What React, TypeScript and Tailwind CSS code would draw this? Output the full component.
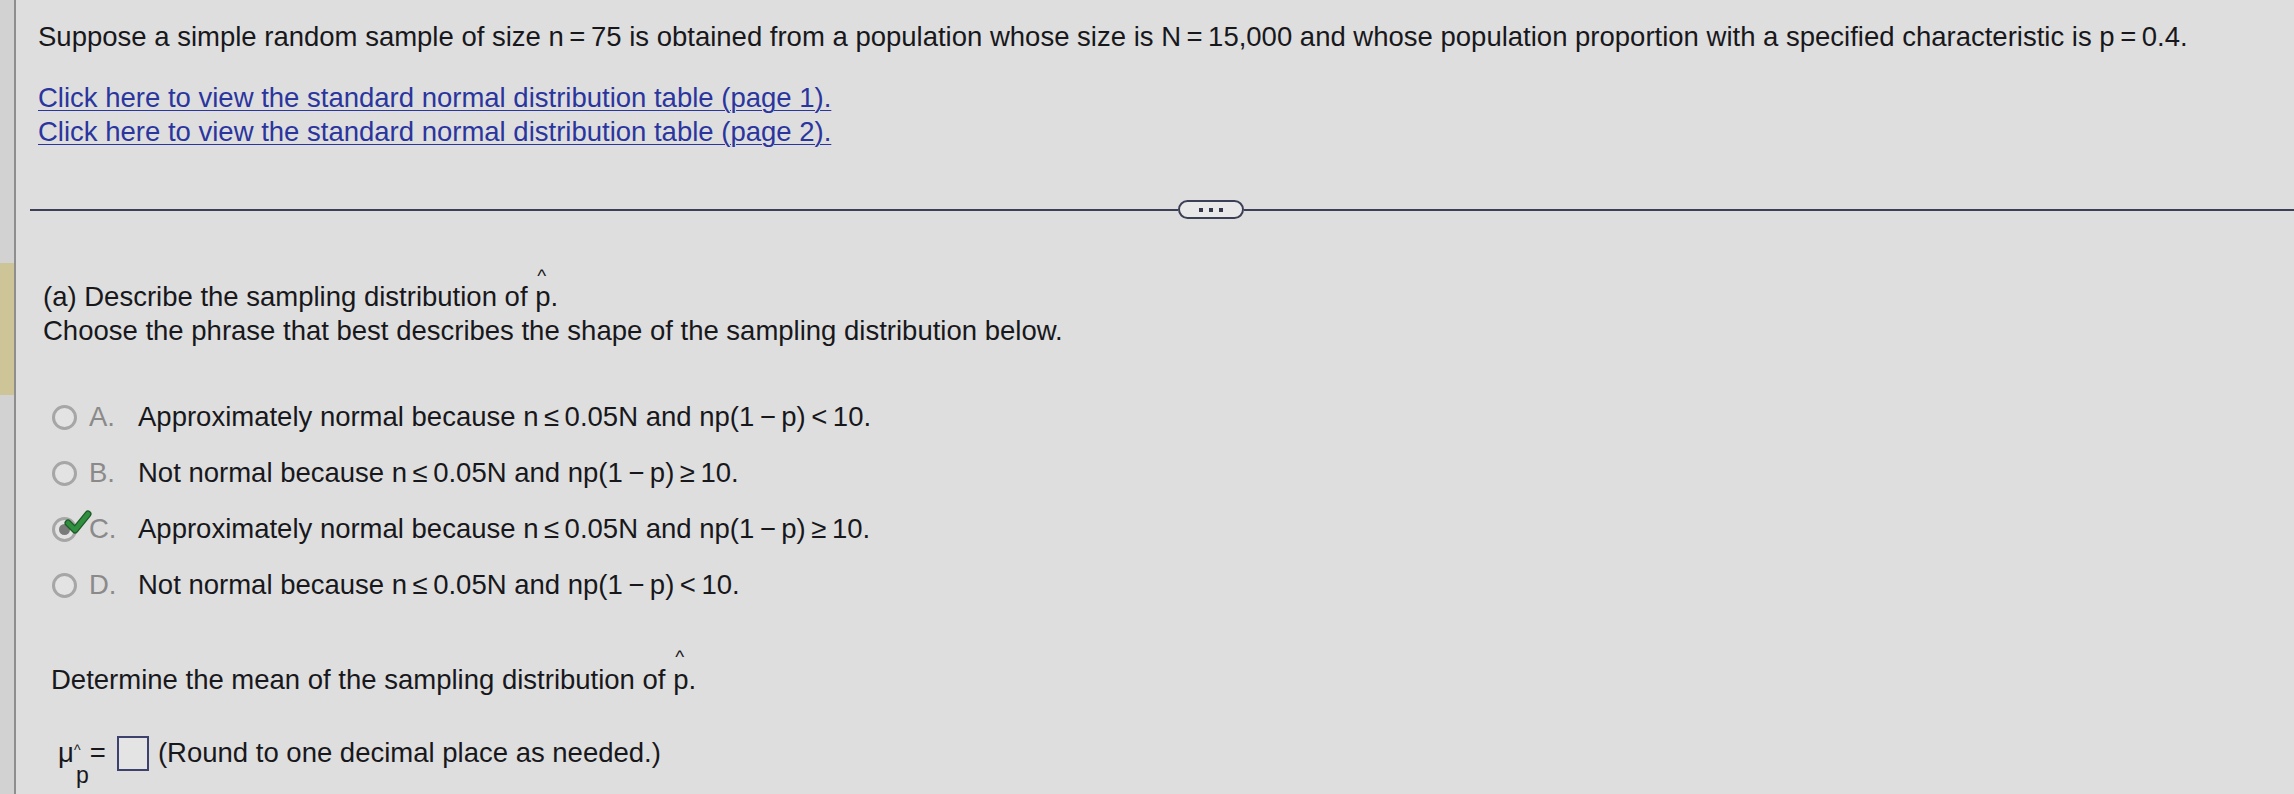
import React from "react";

const Hat = ({ top = "-top-[14px]" }: { top?: string }) => (
  <span className="relative inline-block">
    p
    <span className={`absolute left-[2px] ${top} text-[19px] leading-[19px] text-[#18181c]`}>^</span>
  </span>
);

const Radio = ({ checked = false }: { checked?: boolean }) => (
  <div className="relative flex h-[25px] w-[25px] shrink-0 items-center justify-center rounded-full border-[3px] border-[#a6a6a6] bg-[#e3e3e3]">
    {checked && <div className="h-[11px] w-[11px] rounded-full bg-[#7a7a7a]" />}
    {checked && (
      <svg className="absolute left-[9px] top-[-10px]" width="28" height="24" viewBox="0 0 28 24">
        <path d="M4 13 L11 20 L24 4" fill="none" stroke="#1d5a27" strokeWidth="7" strokeLinecap="round" strokeLinejoin="round" />
        <path d="M4 13 L11 20 L24 4" fill="none" stroke="#2f8f3e" strokeWidth="4.5" strokeLinecap="round" strokeLinejoin="round" />
      </svg>
    )}
  </div>
);

const Option = ({ letter, text, checked }: { letter: string; text: React.ReactNode; checked?: boolean }) => (
  <div className="flex h-[34px] items-center pl-[14px]">
    <Radio checked={checked} />
    <span className="ml-[12px] w-[49px] shrink-0 text-[#8a8a8a]">{letter}</span>
    <span>{text}</span>
  </div>
);

const t = "\u2009";

export default function App() {
  return (
    <div className="flex h-[794px] w-[2294px] overflow-hidden bg-[#dedede] font-['Liberation_Sans',Arial,sans-serif] text-[#18181c]">
      <div className="flex w-[16px] shrink-0 flex-col border-r-2 border-[#8e8e8e]">
        <div className="h-[263px] bg-[#d2d2d2]" />
        <div className="h-[132px] bg-[#cdc597]" />
        <div className="flex-1 bg-[#d2d2d2]" />
      </div>
      <div className="flex flex-1 flex-col pl-[22px] pt-[20px] text-[27.5px] leading-[34px]">
        <p className="whitespace-nowrap">
          Suppose a simple random sample of size n{t}={t}75 is obtained from a population whose size is N{t}={t}15,000 and whose population proportion with a specified characteristic is p{t}={t}0.4.
        </p>
        <div className="mt-[27px] flex flex-col items-start text-[#2b359e]">
          <a className="underline decoration-1 underline-offset-[3px]">Click here to view the standard normal distribution table (page 1).</a>
          <a className="underline decoration-1 underline-offset-[3px]">Click here to view the standard normal distribution table (page 2).</a>
        </div>
        <div className="-ml-[8px] mt-[51px] flex items-center">
          <div className="h-[2px] w-[1148px] bg-[#3c4056]" />
          <div className="flex h-[19px] w-[66px] shrink-0 items-center justify-center gap-[6px] rounded-full border-2 border-[#3c4056] bg-[#e8e8e8]">
            <div className="h-[4px] w-[4px] bg-[#35384a]" />
            <div className="h-[4px] w-[4px] bg-[#35384a]" />
            <div className="h-[4px] w-[4px] bg-[#35384a]" />
          </div>
          <div className="h-[2px] flex-1 bg-[#3c4056]" />
        </div>
        <div className="mt-[61px] pl-[5px]">
          <p>
            (a) Describe the sampling distribution of <Hat />.
          </p>
          <p>Choose the phrase that best describes the shape of the sampling distribution below.</p>
        </div>
        <div className="mt-[52px] flex flex-col gap-[22px]">
          <Option letter="A." text={<>Approximately normal because n{t}≤{t}0.05N and np(1{t}−{t}p){t}&lt;{t}10.</>} />
          <Option letter="B." text={<>Not normal because n{t}≤{t}0.05N and np(1{t}−{t}p){t}≥{t}10.</>} />
          <Option letter="C." checked text={<>Approximately normal because n{t}≤{t}0.05N and np(1{t}−{t}p){t}≥{t}10.</>} />
          <Option letter="D." text={<>Not normal because n{t}≤{t}0.05N and np(1{t}−{t}p){t}&lt;{t}10.</>} />
        </div>
        <p className="mt-[61px] pl-[13px]">
          Determine the mean of the sampling distribution of <Hat top="-top-[16px]" />.
        </p>
        <div className="mt-[39px] flex h-[34px] items-center pl-[20px]">
          <span className="relative inline-block">
            μ
            <span className="absolute left-[16px] top-[7px] text-[14px] leading-[14px]">^</span>
            <span className="absolute left-[18px] top-[28px] text-[23px] leading-[23px]">p</span>
          </span>
          <span className="ml-[16px]">=</span>
          <div className="ml-[11px] h-[35px] w-[32px] border-2 border-[#3c416e] bg-[#e4e4e4]" />
          <span className="ml-[9px]">(Round to one decimal place as needed.)</span>
        </div>
      </div>
    </div>
  );
}
